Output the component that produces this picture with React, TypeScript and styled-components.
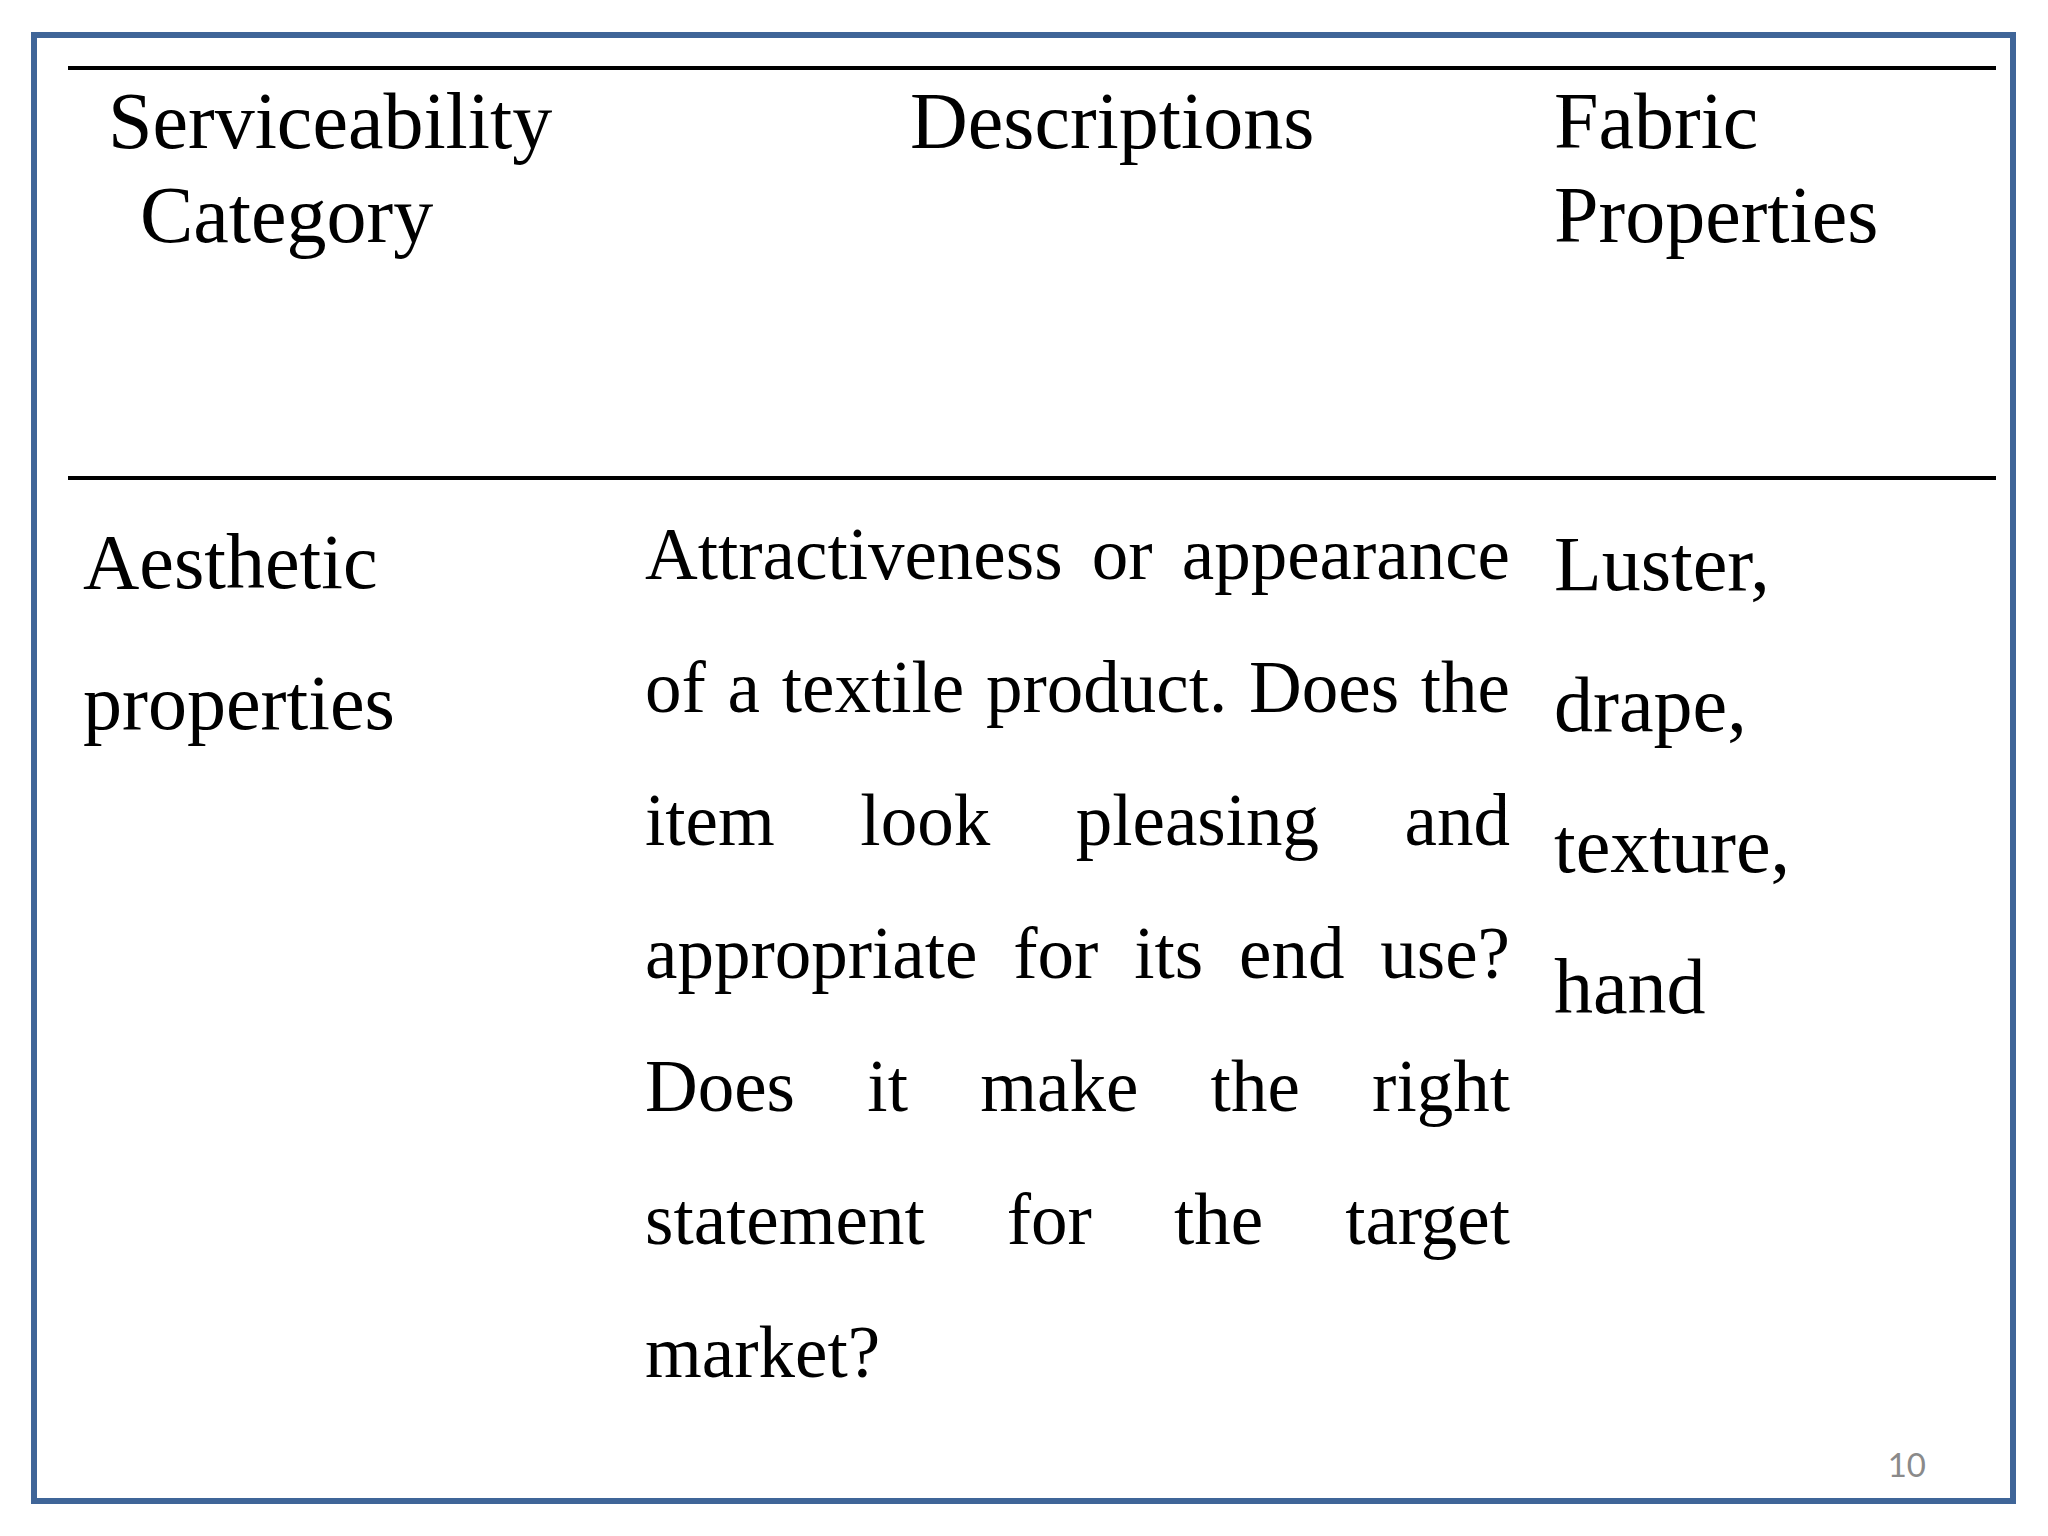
import React from 'react';
import styled, { createGlobalStyle } from 'styled-components';

const GlobalStyle = createGlobalStyle`
  html, body {
    margin: 0;
    padding: 0;
    background: #ffffff;
  }
  body {
    font-family: "Liberation Serif", "Times New Roman", serif;
    color: #000000;
  }
`;

const Slide = styled.div`
  width: 2048px;
  height: 1536px;
  padding: 32px 0 0 31px;
  box-sizing: border-box;
`;

const Frame = styled.div`
  width: 1985px;
  height: 1472px;
  box-sizing: border-box;
  border: 6px solid #3f6598;
  display: flex;
  flex-direction: column;
  padding: 28px 14px 17px 31px;
`;

const Table = styled.div`
  display: flex;
  flex-direction: column;
`;

const Row = styled.div<{ $head?: boolean }>`
  display: grid;
  grid-template-columns: 562px 905px 1fr;
  align-items: start;
  box-sizing: border-box;
  ${(p) =>
    p.$head &&
    `
    height: 414px;
    border-top: 4px solid #000;
    border-bottom: 4px solid #000;
  `}
`;

const HeadCell = styled.div<{ $indent: number }>`
  padding: 4px 0 0 ${(p) => p.$indent}px;
  font-size: 80px;
  line-height: 94px;
`;

const HeadLine = styled.span<{ $shift?: number }>`
  display: block;
  padding-left: ${(p) => p.$shift ?? 0}px;
  white-space: nowrap;
`;

const Cell = styled.div<{ $top: number; $left: number; $right?: number; $size: number; $lh: number; $justify?: boolean; $max?: number }>`
  padding: ${(p) => p.$top}px ${(p) => p.$right ?? 0}px 0 ${(p) => p.$left}px;
  font-size: ${(p) => p.$size}px;
  line-height: ${(p) => p.$lh}px;
  text-align: ${(p) => (p.$justify ? 'justify' : 'left')};
  ${(p) => (p.$max ? `max-width: ${p.$max}px;` : '')}
`;

const Footer = styled.div`
  margin-top: auto;
  display: flex;
  justify-content: flex-end;
  padding-right: 70px;
  font-family: Lato, "Open Sans", sans-serif;
  font-size: 33px;
  line-height: 33px;
  color: #8a8a8a;
`;

export default function App() {
  return (
    <>
      <GlobalStyle />
      <Slide>
        <Frame>
          <Table>
            <Row $head>
              <HeadCell $indent={40}>
                <HeadLine>Serviceability</HeadLine>
                <HeadLine $shift={32}>Category</HeadLine>
              </HeadCell>
              <HeadCell $indent={280}>
                <HeadLine>Descriptions</HeadLine>
              </HeadCell>
              <HeadCell $indent={19}>
                <HeadLine>Fabric</HeadLine>
                <HeadLine>Properties</HeadLine>
              </HeadCell>
            </Row>
            <Row>
              <Cell $top={11} $left={15} $size={78} $lh={141}>
                Aesthetic properties
              </Cell>
              <Cell $top={8} $left={15} $right={25} $size={73} $lh={133} $justify>
                Attractiveness or appearance of a textile product. Does the item look pleasing and
                appropriate for its end use? Does it make the right statement for the target market?
              </Cell>
              <Cell $top={13} $left={19} $size={78} $lh={141} $max={320}>
                Luster, drape, texture, hand
              </Cell>
            </Row>
          </Table>
          <Footer>10</Footer>
        </Frame>
      </Slide>
    </>
  );
}
